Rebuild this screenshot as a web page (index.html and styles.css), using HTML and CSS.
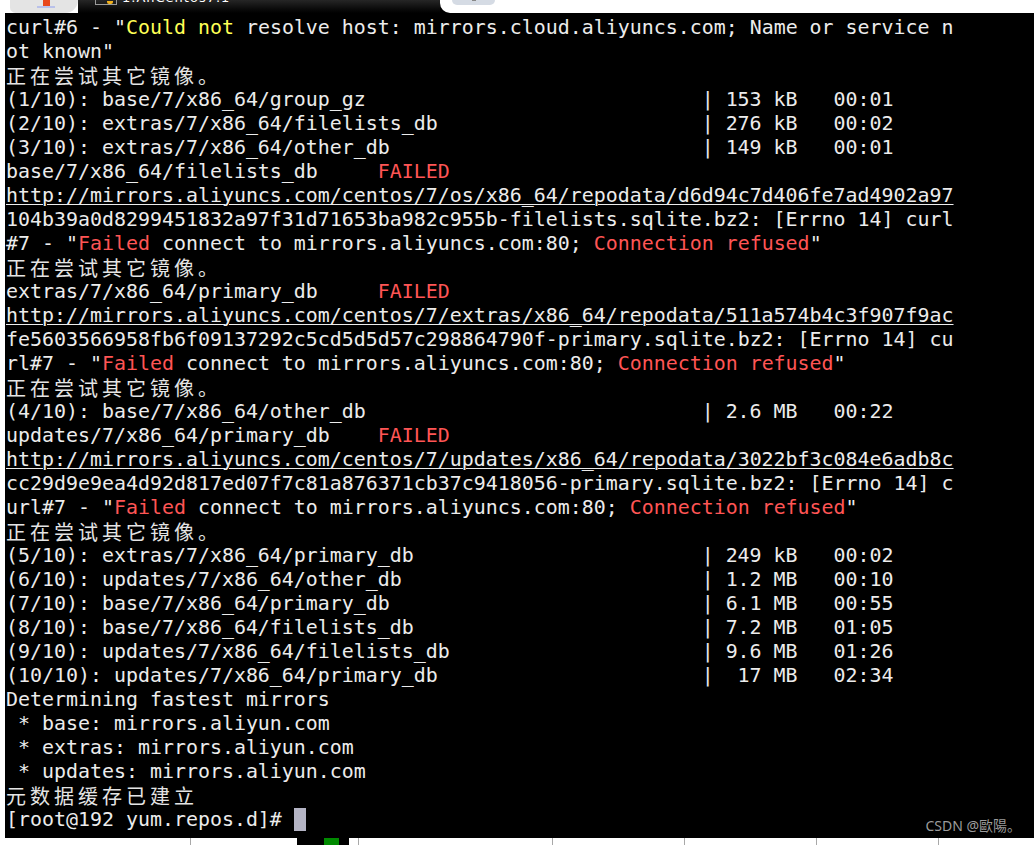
FILE: index.html
```html
<!DOCTYPE html>
<html lang="zh">
<head>
<meta charset="utf-8">
<title>Terminal</title>
<link rel="stylesheet" href="styles.css">
</head>
<body>
<div class="tabbar">
  <div class="tb-left">
    <div class="tb-left-shape">
      <div class="tb-icon"><span class="tb-icon-red"></span></div>
    </div>
  </div>
  <div class="tb-active">
    <div class="tb-box"><span class="tb-box-y"></span></div>
    <div class="tb-title"><span>1.AliCentos7.1</span></div>
  </div>
  <div class="tb-right">
    <div class="tb-right-shape"><span class="tb-right-mark"></span></div>
  </div>
</div>

<div class="term">
<div class="ln">curl#6 - "<span class="y">Could not</span> resolve host: mirrors.cloud.aliyuncs.com; Name or service n</div>
<div class="ln">ot known"</div>
<div class="ln cjk">正在尝试其它镜像。</div>
<div class="ln"><span class="col">(1/10): base/7/x86_64/group_gz</span>| 153 kB   00:01</div>
<div class="ln"><span class="col">(2/10): extras/7/x86_64/filelists_db</span>| 276 kB   00:02</div>
<div class="ln"><span class="col">(3/10): extras/7/x86_64/other_db</span>| 149 kB   00:01</div>
<div class="ln">base/7/x86_64/filelists_db     <span class="r">FAILED</span></div>
<div class="ln"><span class="u">http://mirrors.aliyuncs.com/centos/7/os/x86_64/repodata/d6d94c7d406fe7ad4902a97</span></div>
<div class="ln">104b39a0d8299451832a97f31d71653ba982c955b-filelists.sqlite.bz2: [Errno 14] curl</div>
<div class="ln">#7 - "<span class="r">Failed</span> connect to mirrors.aliyuncs.com:80; <span class="r">Connection refused</span>"</div>
<div class="ln cjk">正在尝试其它镜像。</div>
<div class="ln">extras/7/x86_64/primary_db     <span class="r">FAILED</span></div>
<div class="ln"><span class="u">http://mirrors.aliyuncs.com/centos/7/extras/x86_64/repodata/511a574b4c3f907f9ac</span></div>
<div class="ln">fe5603566958fb6f09137292c5cd5d5d57c298864790f-primary.sqlite.bz2: [Errno 14] cu</div>
<div class="ln">rl#7 - "<span class="r">Failed</span> connect to mirrors.aliyuncs.com:80; <span class="r">Connection refused</span>"</div>
<div class="ln cjk">正在尝试其它镜像。</div>
<div class="ln"><span class="col">(4/10): base/7/x86_64/other_db</span>| 2.6 MB   00:22</div>
<div class="ln">updates/7/x86_64/primary_db    <span class="r">FAILED</span></div>
<div class="ln"><span class="u">http://mirrors.aliyuncs.com/centos/7/updates/x86_64/repodata/3022bf3c084e6adb8c</span></div>
<div class="ln">cc29d9e9ea4d92d817ed07f7c81a876371cb37c9418056-primary.sqlite.bz2: [Errno 14] c</div>
<div class="ln">url#7 - "<span class="r">Failed</span> connect to mirrors.aliyuncs.com:80; <span class="r">Connection refused</span>"</div>
<div class="ln cjk">正在尝试其它镜像。</div>
<div class="ln"><span class="col">(5/10): extras/7/x86_64/primary_db</span>| 249 kB   00:02</div>
<div class="ln"><span class="col">(6/10): updates/7/x86_64/other_db</span>| 1.2 MB   00:10</div>
<div class="ln"><span class="col">(7/10): base/7/x86_64/primary_db</span>| 6.1 MB   00:55</div>
<div class="ln"><span class="col">(8/10): base/7/x86_64/filelists_db</span>| 7.2 MB   01:05</div>
<div class="ln"><span class="col">(9/10): updates/7/x86_64/filelists_db</span>| 9.6 MB   01:26</div>
<div class="ln"><span class="col">(10/10): updates/7/x86_64/primary_db</span>|  17 MB   02:34</div>
<div class="ln">Determining fastest mirrors</div>
<div class="ln"> * base: mirrors.aliyun.com</div>
<div class="ln"> * extras: mirrors.aliyun.com</div>
<div class="ln"> * updates: mirrors.aliyun.com</div>
<div class="ln cjk">元数据缓存已建立</div>
<div class="ln">[root@192 yum.repos.d]# <span class="cursor"></span></div>
<div class="watermark">CSDN @歐陽。</div>
</div>

<div class="statusbar">
  <div class="sb sb1"></div>
  <div class="sb sb2"></div>
  <div class="sb-box"><span class="sb-green"></span></div>
  <div class="sb sb-gap"></div>
  <div class="sb sb3"></div>
  <div class="sb sb4"></div>
  <div class="sb sb5"></div>
  <div class="sb sb6"></div>
  <div class="sb sb7"></div>
</div>
</body>
</html>
```

FILE: styles.css
```css
html, body {
  margin: 0;
  padding: 0;
  background: #ffffff;
  overflow: hidden;
}

body {
  width: 1034px;
  height: 845px;
}

/* ---------- tab strip ---------- */
.tabbar {
  display: flex;
  height: 13px;
  background: #000;
}

.tb-left {
  width: 78px;
  background: #ffffff;
  display: flex;
}

.tb-left-shape {
  margin-left: 10px;
  width: 68px;
  height: 13px;
  background: #e4e4e4;
  border-radius: 0 0 14px 6px;
  display: flex;
}

.tb-icon {
  margin-left: 27px;
  width: 18px;
  height: 6px;
  border-bottom: 2px solid #b9c1ea;
  display: flex;
  justify-content: center;
}

.tb-icon-red {
  width: 7px;
  height: 6px;
  background: #e8481c;
}

.tb-active {
  width: 362px;
  background: linear-gradient(to bottom, #262626, #0a0a0a 70%, #000);
  display: flex;
  align-items: flex-start;
}

.tb-box {
  margin-left: 17px;
  width: 20px;
  height: 4px;
  border: 1px solid #9a9a9a;
  border-top: none;
  display: flex;
  justify-content: flex-end;
  align-items: flex-end;
}

.tb-box-y {
  width: 6px;
  height: 3px;
  margin-right: 3px;
  background: #f2b21c;
  border-radius: 0 0 2px 2px;
}

.tb-title {
  margin-left: 5px;
  height: 4px;
  overflow: hidden;
  font-family: "DejaVu Sans", sans-serif;
  font-size: 13px;
  line-height: 13px;
  color: #ffffff;
  letter-spacing: 1px;
}

.tb-title span {
  display: block;
  margin-top: -9px;
}

.tb-right {
  flex: 1;
  background: #ffffff;
  border-bottom-left-radius: 10px;
  display: flex;
}

.tb-right-shape {
  margin-left: 12px;
  width: 43px;
  height: 5px;
  background: #d5dbe4;
  border-radius: 0 0 5px 5px;
  display: flex;
  justify-content: center;
}

.tb-right-mark {
  width: 4px;
  height: 1px;
  background: #888;
}

/* ---------- terminal ---------- */
.term {
  position: relative;
  margin-left: 5px;
  height: 825px;
  box-sizing: border-box;
  padding: 3px 0 0 1px;
  background: #000000;
  color: #ececec;
  font-family: "DejaVu Sans Mono", "Noto Sans CJK SC", monospace;
  font-size: 19.93px;
  line-height: 24px;
  overflow: hidden;
}

.ln {
  height: 24px;
  white-space: pre;
  overflow: visible;
}

.ln.cjk {
  font-family: "Noto Sans CJK SC", sans-serif;
  font-size: 20px;
  letter-spacing: 4px;
  color: #e4e4e4;
}

.col {
  display: inline-block;
  width: 58ch;
}

.y {
  color: #ffff55;
}

.r {
  color: #ff5555;
}

.u {
  text-decoration: underline;
  text-decoration-thickness: 1px;
  text-underline-offset: 2px;
}

.cursor {
  display: inline-block;
  width: 12px;
  height: 23px;
  margin-top: 0;
  vertical-align: top;
  background: #b4b4c4;
}

.watermark {
  position: absolute;
  right: 13px;
  bottom: 3px;
  font-family: "Noto Sans", "Noto Sans CJK SC", sans-serif;
  font-size: 14px;
  line-height: 18px;
  color: #9c9c9c;
  white-space: nowrap;
}

/* ---------- status strip ---------- */
.statusbar {
  display: flex;
  height: 7px;
  background: #ffffff;
}

.sb {
  height: 7px;
}

.sb1 { width: 190px; }
.sb2 { width: 106px; border-left: 1px solid #a8a8a8; }
.sb-box {
  width: 52px;
  height: 7px;
  background: #000;
  display: flex;
}
.sb-green {
  margin-left: 27px;
  width: 15px;
  height: 7px;
  background: #008a00;
}
.sb-gap { width: 9px; }
.sb3 { width: 193px; border-left: 1px solid #a8a8a8; }
.sb4 { width: 131px; border-left: 1px solid #a8a8a8; }
.sb5 { width: 131px; border-left: 1px solid #a8a8a8; }
.sb6 { width: 121px; border-left: 1px solid #a8a8a8; }
.sb7 { flex: 1; border-left: 1px solid #a8a8a8; }
```
